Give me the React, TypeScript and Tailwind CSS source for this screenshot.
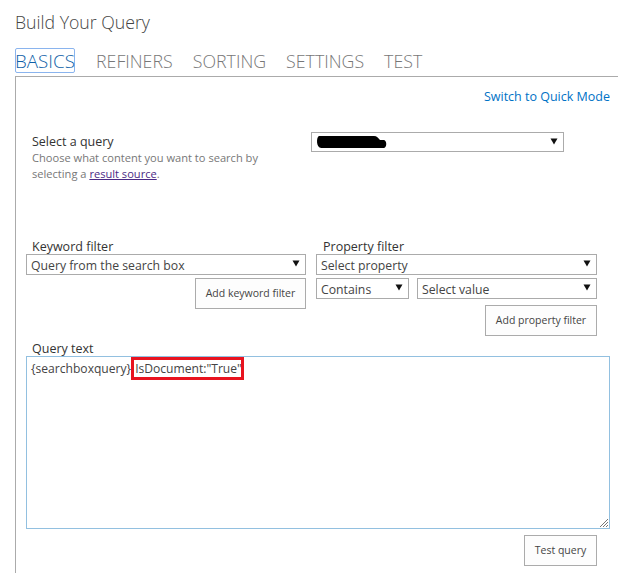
const FONT = "font-['Open_Sans',sans-serif]";

function Caret() {
  return (
    <svg width="8" height="7" viewBox="0 0 8 7" className="shrink-0 -mt-[2px]">
      <path d="M0.5 0.5H7.5L4 6.5Z" fill="#111" />
    </svg>
  );
}

function Dropdown({ label, className = "", children }: { label?: string; className?: string; children?: React.ReactNode }) {
  return (
    <div className={`flex items-center justify-between border border-[#ababab] bg-white pl-[4px] pr-[5px] text-[12.25px] text-[#444] ${className}`}>
      <span className="whitespace-nowrap pt-[3px]">{label}</span>
      {children}
      <Caret />
    </div>
  );
}

function Button({ label, className = "" }: { label: string; className?: string }) {
  return (
    <div className={`flex items-center justify-center border border-[#ababab] bg-[#fdfdfd] text-[10.5px] text-[#444] ${className}`}>
      {label}
    </div>
  );
}

const tabs = ["REFINERS", "SORTING", "SETTINGS", "TEST"];

export default function App() {
  return (
    <div className={`w-[618px] h-[573px] overflow-hidden bg-white ${FONT}`}>
      <h1 className="pl-[15px] pt-[9px] h-[48px] text-[17.7px] leading-[26px] font-light text-[#444]">Build Your Query</h1>

      <div className="flex items-center h-[25px] pl-[15px] text-[17.8px] font-light text-[#777]">
        <span className="w-[60px] h-[25px] flex items-center justify-center border border-[#8ab4ee] rounded-[2px] pt-[1px] text-[18.8px] text-[#0f5fa8]">BASICS</span>
        <div className="flex ml-[21px] gap-[20px] pt-[1px]">
          {tabs.map((t) => (
            <span key={t}>{t}</span>
          ))}
        </div>
      </div>

      <div className="mt-[3px] ml-[15px] w-[620px] h-[520px] border-l border-t border-[#ababab]">
        <div className="w-[594px] pt-[11px] text-right text-[12.5px] leading-[17px] text-[#0072c6]">Switch to Quick Mode</div>

        <div className="flex mt-[27px] h-[106px]">
          <div className="w-[295px] pl-[16px] pt-[1px]">
            <div className="text-[12.5px] leading-[17px] text-[#333]">Select a query</div>
            <div className="text-[11.1px] leading-[16px] text-[#777]">
              Choose what content you want to search by
              <br />
              selecting a <span className="underline text-[#4b2a85]">result source</span>.
            </div>
          </div>
          <Dropdown className="relative w-[253px] h-[20px]">
            <svg width="71" height="13" viewBox="0 0 71 13" className="absolute left-[4px] top-[3px]">
              <path d="M3 0H58C61 0 62 2 64 4H68C71 5 71 11 68 12H6C0 13 0 1 3 0Z" fill="#000" />
            </svg>
          </Dropdown>
        </div>

        <div className="flex">
          <div className="flex flex-col w-[280px] ml-[10px]">
            <div className="pl-[6px] pt-[1px] h-[16px] text-[12.5px] leading-[16px] text-[#333]">Keyword filter</div>
            <Dropdown label="Query from the search box" className="w-[280px] h-[21px]" />
            <Button label="Add keyword filter" className="self-end mt-[3px] w-[111px] h-[31px]" />
          </div>
          <div className="flex flex-col w-[281px] ml-[10px]">
            <div className="pl-[7px] pt-[1px] h-[16px] text-[12.5px] leading-[16px] text-[#333]">Property filter</div>
            <Dropdown label="Select property" className="h-[21px]" />
            <div className="flex justify-between mt-[3px]">
              <Dropdown label="Contains" className="w-[93px] h-[21px]" />
              <Dropdown label="Select value" className="w-[180px] h-[21px]" />
            </div>
            <Button label="Add property filter" className="self-end mt-[6px] w-[112px] h-[31px]" />
          </div>
        </div>

        <div className="ml-[16px] mt-[4px] pt-[1px] h-[16px] text-[12.5px] leading-[16px] text-[#333]">Query text</div>
        <div className="relative ml-[10px] w-[584px] h-[173px] border border-[#92c0e0] bg-white pl-[4px] pt-[3px] text-[12.1px] leading-[18px] text-[#444]">
          {"{searchboxquery}"}
          <span className="ml-[4px]">{"IsDocument:\"True\""}</span>
          <div className="absolute left-[104px] top-0 w-[113px] h-[23px] border-[3px] border-[#e8131f]" />
          <svg width="10" height="10" viewBox="0 0 10 10" className="absolute right-0 bottom-0">
            <path d="M1 9L9 1M4 9L9 4M7 9L9 7" stroke="#777" strokeWidth="1" />
          </svg>
        </div>
        <div className="flex justify-end w-[581px] mt-[6px]">
          <Button label="Test query" className="w-[73px] h-[31px]" />
        </div>
      </div>
    </div>
  );
}
